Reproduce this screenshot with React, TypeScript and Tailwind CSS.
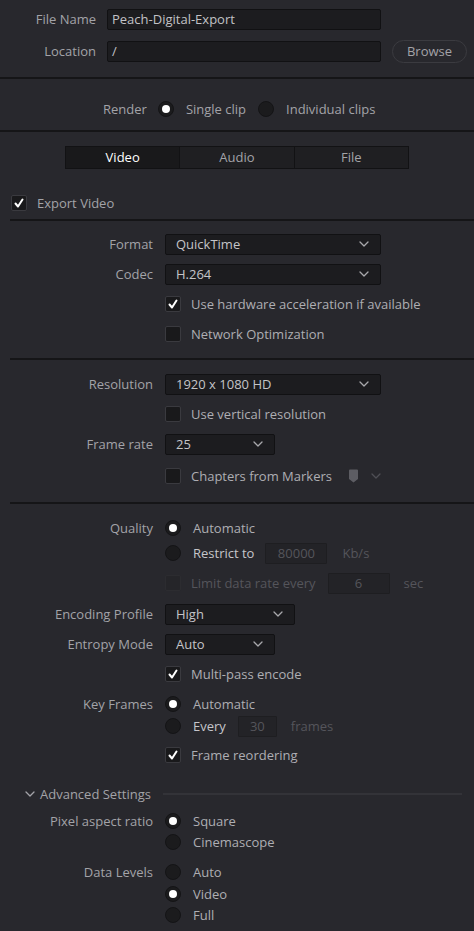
import type { ReactNode } from "react";

function Chevron({ className = "" }: { className?: string }) {
  return (
    <svg
      viewBox="0 0 10 6"
      className={`h-[6px] w-[10px] ${className}`}
      fill="none"
      stroke="currentColor"
      strokeWidth="1.3"
      strokeLinecap="round"
      strokeLinejoin="round"
    >
      <path d="M1 1l4 4 4-4" />
    </svg>
  );
}

function Divider({ inset = false, className = "" }: { inset?: boolean; className?: string }) {
  return <div className={`h-[2px] bg-[#151517] ${inset ? "ml-[10px]" : ""} ${className}`} />;
}

function Radio({ on = false }: { on?: boolean }) {
  return (
    <span className="flex h-[16px] w-[16px] shrink-0 items-center justify-center rounded-full border border-[#141416] bg-[#1b1b1d]">
      {on && <span className="h-[8px] w-[8px] rounded-full bg-white" />}
    </span>
  );
}

function Check({ on = false, dim = false }: { on?: boolean; dim?: boolean }) {
  return (
    <span
      className={`flex h-[16px] w-[16px] shrink-0 items-center justify-center rounded-[2px] border ${
        dim ? "border-[#2c2c30] bg-[#252529]" : "border-[#3a3a3f] bg-[#19191b]"
      }`}
    >
      {on && (
        <svg viewBox="0 0 12 12" className="h-[12px] w-[12px]" fill="none" stroke="white" strokeWidth="2" strokeLinecap="round" strokeLinejoin="round">
          <path d="M2.5 6.5l2.5 3 4.5-7" />
        </svg>
      )}
    </span>
  );
}

function Select({ value, width }: { value: string; width: string }) {
  return (
    <div
      className={`flex h-[21px] ${width} items-center justify-between rounded-[2px] border border-[#111113] bg-[#1c1c1f] pl-[10px] pr-[11px] text-[#c4c4c8]`}
    >
      <span>{value}</span>
      <Chevron className="text-[#a8a8ac]" />
    </div>
  );
}

function Field({ value, width }: { value: string; width: string }) {
  return (
    <div
      className={`flex h-[21px] ${width} items-center justify-center rounded-[1px] border border-[#1e1e21] bg-[#232327] text-[#55555b]`}
    >
      {value}
    </div>
  );
}

function Row({ label, mt, children }: { label?: string; mt: string; children: ReactNode }) {
  return (
    <div className={`flex h-[20px] items-center ${mt}`}>
      <div className="w-[153px] shrink-0 text-right text-[#a3a3a8]">{label}</div>
      <div className="ml-[12px] flex items-center">{children}</div>
    </div>
  );
}

function Opt({ children, dim = false, bright = false }: { children: ReactNode; dim?: boolean; bright?: boolean }) {
  return (
    <span className={`${dim ? "text-[#55555b]" : bright ? "text-[#c6c6ca]" : "text-[#aeaeb3]"}`}>{children}</span>
  );
}

export default function App() {
  return (
    <div
      className="h-[931px] w-[474px] overflow-hidden bg-[#28282d] text-[13px] leading-none"
      style={{ fontFamily: '"Open Sans", "Noto Sans", sans-serif' }}
    >
      {/* file */}
      <div className="pt-[9px] pb-[15px]">
        <div className="flex h-[21px] items-center">
          <div className="w-[96px] text-right text-[#a3a3a8]">File Name</div>
          <div className="ml-[11px] flex h-[21px] w-[274px] items-center rounded-[2px] border border-[#111113] bg-[#1c1c1f] pl-[4px] text-[#c2c2c6]">
            Peach-Digital-Export
          </div>
        </div>
        <div className="mt-[11px] flex h-[21px] items-center">
          <div className="w-[96px] text-right text-[#a3a3a8]">Location</div>
          <div className="ml-[11px] flex h-[21px] w-[274px] items-center rounded-[2px] border border-[#111113] bg-[#1c1c1f] pl-[4px] text-[#c2c2c6]">
            /
          </div>
          <button className="ml-[11px] flex h-[23px] w-[75px] items-center justify-center rounded-full border border-[#3b3b40] text-[#a3a3a8]">
            Browse
          </button>
        </div>
      </div>
      <Divider />

      {/* render */}
      <div className="mt-[20px] flex h-[20px] items-center pl-[103px]">
        <span className="text-[#a3a3a8]">Render</span>
        <span className="ml-[11px]"><Radio on /></span>
        <span className="ml-[12px] text-[#a3a3a8]">Single clip</span>
        <span className="ml-[12px]"><Radio /></span>
        <span className="ml-[12px] text-[#a3a3a8]">Individual clips</span>
      </div>
      <Divider className="mt-[11px]" />

      {/* tabs */}
      <div className="mx-auto mt-[14px] flex h-[23px] w-[344px] border border-[#121214] bg-[#1f1f22]">
        <div className="flex flex-1 items-center justify-center bg-[#19191b] text-white">Video</div>
        <div className="flex flex-1 items-center justify-center border-l border-[#121214] text-[#a3a3a8]">Audio</div>
        <div className="flex flex-1 items-center justify-center border-l border-[#121214] text-[#a3a3a8]">File</div>
      </div>

      <div className="mt-[24px] flex h-[20px] items-center pl-[11px]">
        <Check on />
        <span className="ml-[10px] text-[#a3a3a8]">Export Video</span>
      </div>
      <Divider inset className="mt-[6px]" />

      {/* format */}
      <Row label="Format" mt="mt-[13px]">
        <Select value="QuickTime" width="w-[216px]" />
      </Row>
      <Row label="Codec" mt="mt-[10px]">
        <Select value="H.264" width="w-[216px]" />
      </Row>
      <Row mt="mt-[10px]">
        <Check on />
        <span className="ml-[10px]"><Opt>Use hardware acceleration if available</Opt></span>
      </Row>
      <Row mt="mt-[10px]">
        <Check />
        <span className="ml-[10px]"><Opt>Network Optimization</Opt></span>
      </Row>
      <Divider inset className="mt-[14px]" />

      {/* resolution */}
      <Row label="Resolution" mt="mt-[14px]">
        <Select value="1920 x 1080 HD" width="w-[216px]" />
      </Row>
      <Row mt="mt-[10px]">
        <Check />
        <span className="ml-[10px]"><Opt>Use vertical resolution</Opt></span>
      </Row>
      <Row label="Frame rate" mt="mt-[10px]">
        <Select value="25" width="w-[110px]" />
      </Row>
      <Row mt="mt-[12px]">
        <Check />
        <span className="ml-[10px]"><Opt>Chapters from Markers</Opt></span>
        <svg viewBox="0 0 11 14" className="ml-[16px] h-[14px] w-[11px]">
          <path d="M1 1.5a1 1 0 0 1 1-1h7a1 1 0 0 1 1 1v8.5l-4.5 3.5-4.5-3.5z" fill="#5d5d63" />
        </svg>
        <Chevron className="ml-[12px] text-[#4f4f55]" />
      </Row>
      <Divider inset className="mt-[16px]" />

      {/* quality */}
      <Row label="Quality" mt="mt-[14px]">
        <Radio on />
        <span className="ml-[12px]"><Opt>Automatic</Opt></span>
      </Row>
      <Row mt="mt-[5px]">
        <Radio />
        <span className="ml-[12px]"><Opt bright>Restrict to</Opt></span>
        <span className="ml-[11px]"><Field value="80000" width="w-[62px]" /></span>
        <span className="ml-[15px]"><Opt dim>Kb/s</Opt></span>
      </Row>
      <Row mt="mt-[10px]">
        <Check dim />
        <span className="ml-[10px]"><Opt dim>Limit data rate every</Opt></span>
        <span className="ml-[12px]"><Field value="6" width="w-[62px]" /></span>
        <span className="ml-[14px]"><Opt dim>sec</Opt></span>
      </Row>
      <Row label="Encoding Profile" mt="mt-[11px]">
        <Select value="High" width="w-[130px]" />
      </Row>
      <Row label="Entropy Mode" mt="mt-[10px]">
        <Select value="Auto" width="w-[110px]" />
      </Row>
      <Row mt="mt-[10px]">
        <Check on />
        <span className="ml-[10px]"><Opt>Multi-pass encode</Opt></span>
      </Row>
      <Row label="Key Frames" mt="mt-[10px]">
        <Radio on />
        <span className="ml-[12px]"><Opt>Automatic</Opt></span>
      </Row>
      <Row mt="mt-[2px]">
        <Radio />
        <span className="ml-[12px]"><Opt bright>Every</Opt></span>
        <span className="ml-[12px]"><Field value="30" width="w-[39px]" /></span>
        <span className="ml-[14px]"><Opt dim>frames</Opt></span>
      </Row>
      <Row mt="mt-[9px]">
        <Check on />
        <span className="ml-[10px]"><Opt>Frame reordering</Opt></span>
      </Row>

      {/* advanced */}
      <div className="mt-[19px] flex h-[20px] items-center pl-[25px] pr-[12px]">
        <Chevron className="text-[#a3a3a8]" />
        <span className="ml-[5px] text-[#a3a3a8]">Advanced Settings</span>
        <div className="ml-[12px] h-[2px] flex-1 bg-[#333338]" />
      </div>
      <Row label="Pixel aspect ratio" mt="mt-[7px]">
        <Radio on />
        <span className="ml-[12px]"><Opt>Square</Opt></span>
      </Row>
      <Row mt="mt-[1px]">
        <Radio />
        <span className="ml-[12px]"><Opt>Cinemascope</Opt></span>
      </Row>
      <Row label="Data Levels" mt="mt-[10px]">
        <Radio />
        <span className="ml-[12px]"><Opt>Auto</Opt></span>
      </Row>
      <Row mt="mt-[2px]">
        <Radio on />
        <span className="ml-[12px]"><Opt>Video</Opt></span>
      </Row>
      <Row mt="mt-[1px]">
        <Radio />
        <span className="ml-[12px]"><Opt>Full</Opt></span>
      </Row>
    </div>
  );
}
